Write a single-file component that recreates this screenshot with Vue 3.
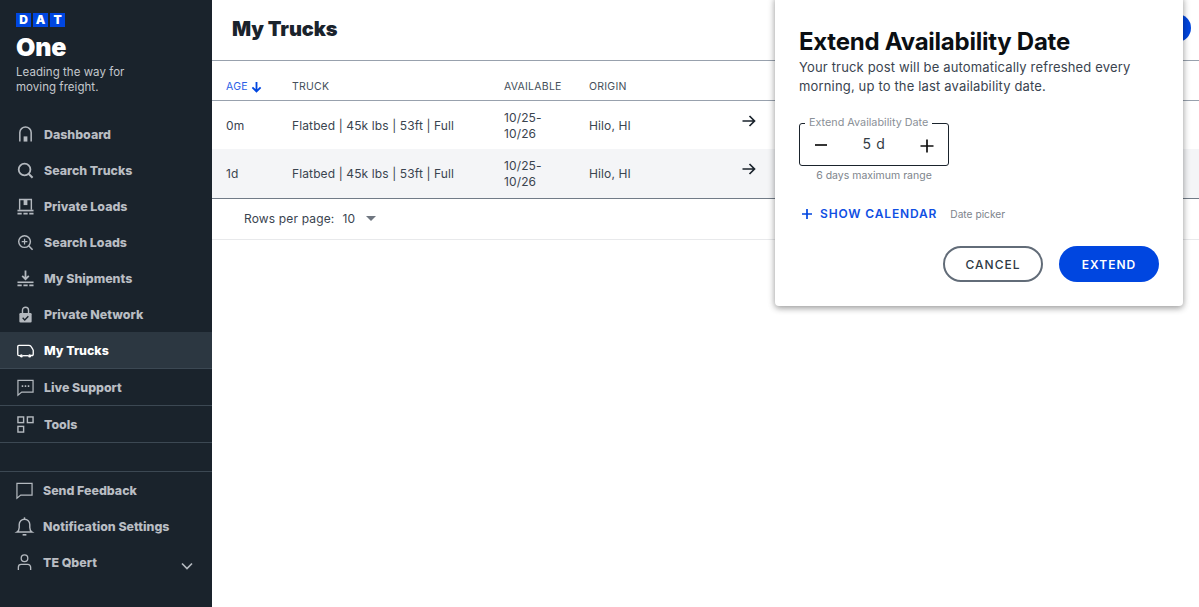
<script setup>
const plainItems = [
  { label: 'Dashboard', icon: 'home' },
  { label: 'Search Trucks', icon: 'search' },
  { label: 'Private Loads', icon: 'loads' },
  { label: 'Search Loads', icon: 'searchplus' },
  { label: 'My Shipments', icon: 'ship' },
  { label: 'Private Network', icon: 'lock' },
]
const rows = [
  { age: '0m', shaded: false },
  { age: '1d', shaded: true },
]
</script>

<template>
  <div class="page">
    <aside class="side">
      <div class="brand">
        <div class="dat"><span>D</span><span>A</span><span>T</span></div>
        <div class="one">One</div>
        <p class="tag">Leading the way for<br />moving freight.</p>
      </div>
      <nav class="nav">
        <a v-for="it in plainItems" :key="it.label" class="item">
          <svg class="ic" viewBox="0 0 18 18" fill="none" stroke="#b4b9bf" stroke-width="1.6">
            <template v-if="it.icon === 'home'">
              <path d="M3 16.500V7a6 6 0 0 1 12 0v9.500" />
              <path d="M7 16.500V11h4v5.500z" fill="#b4b9bf" stroke="none" />
            </template>
            <template v-else-if="it.icon === 'search'">
              <circle cx="8" cy="8" r="6.200" stroke-width="1.900" />
              <path d="M12.300 12.500 16.500 16.700" stroke-width="2.200" />
            </template>
            <template v-else-if="it.icon === 'loads'">
              <path d="M2.800 12.500V1.500h12.400v11" stroke-width="1.500" />
              <path d="M7 2h4v5.500H7z" fill="#b4b9bf" stroke="none" />
              <path d="M.5 13.300h17" stroke-width="1.800" />
              <path d="M.5 16.500h4.500M6.800 16.500h4.500M13 16.500h4.500" stroke-width="1.800" />
            </template>
            <template v-else-if="it.icon === 'searchplus'">
              <circle cx="8" cy="8" r="6.200" stroke-width="1.500" />
              <path d="M12.300 12.500 16.500 16.700" stroke-width="1.700" />
              <path d="M8 5v6M5 8h6" stroke-width="1.300" />
            </template>
            <template v-else-if="it.icon === 'ship'">
              <path d="M9 .5v9M5.500 6.300 9 9.800l3.500-3.500" stroke-width="1.900" />
              <path d="M.5 13h17" stroke-width="1.700" />
              <path d="M.5 16.300h4.500M6.800 16.300h4.500M13 16.300h4.500" stroke-width="1.800" />
            </template>
            <template v-else>
              <path d="M5.800 8V4.500a3.200 3.200 0 0 1 6.400 0V8" stroke-width="1.500" />
              <rect x="2.500" y="7.500" width="13" height="10" rx="1.200" fill="#b4b9bf" stroke="none" />
              <path d="m6 12.500 2.200 2.200 3.800-3.800" stroke="#1a232c" stroke-width="1.500" />
            </template>
          </svg>
          <span>{{ it.label }}</span>
        </a>
        <a class="item active">
          <svg class="ic" viewBox="0 0 18 18" fill="none" stroke="#fff" stroke-width="1.400">
            <path d="M3.500 14.500H2a1.200 1.200 0 0 1-1.200-1.200V4.700A1.200 1.200 0 0 1 2 3.500h10.500c1 0 1.800.4 2.300 1.200l2 3c.3.4.4.9.4 1.400v4a1.200 1.200 0 0 1-1.200 1.200h-1.500" />
            <path d="M5.800 14.500h6.400" />
            <circle cx="4.600" cy="14.700" r=".9" />
            <circle cx="13.400" cy="14.700" r=".9" />
          </svg>
          <span>My Trucks</span>
        </a>
        <a class="item ruled tall">
          <svg class="ic" viewBox="0 0 18 18" fill="none" stroke="#b4b9bf" stroke-width="1.300">
            <path d="M1 1.500h16v12.300H5l-4 3.300z" />
            <path d="M5 7.500h1.600M8.200 7.500h1.600M11.400 7.500H13" stroke-width="1.700" />
          </svg>
          <span>Live Support</span>
        </a>
        <a class="item ruled tall">
          <svg class="ic" viewBox="0 0 18 18" fill="none" stroke="#b4b9bf" stroke-width="1.500">
            <rect x="1" y="1" width="6" height="6" />
            <rect x="11" y="1" width="6" height="6" />
            <rect x="1" y="11" width="6" height="6" />
          </svg>
          <span>Tools</span>
        </a>
      </nav>
      <div class="foot">
        <a class="item low">
          <svg class="ic" viewBox="0 0 18 18" fill="none" stroke="#b4b9bf" stroke-width="1.300">
            <path d="M1 1.500h16v12.300H5l-4 3.300z" />
          </svg>
          <span>Send Feedback</span>
        </a>
        <a class="item low">
          <svg class="ic bell" viewBox="0 0 18 20" fill="none" stroke="#b4b9bf" stroke-width="1.500">
            <path d="M1 15.800c1.600-1 2.400-2.400 2.400-4.800V8a5.600 5.600 0 0 1 11.200 0v3c0 2.400.8 3.800 2.400 4.800z" />
            <path d="M9 .3v2" />
            <path d="M7 18.800h4" stroke-width="1.700" />
          </svg>
          <span>Notification Settings</span>
        </a>
        <a class="item low">
          <svg class="ic" viewBox="0 0 18 18" fill="none" stroke="#b4b9bf" stroke-width="1.400">
            <circle cx="9" cy="4.500" r="3.500" />
            <path d="M2.500 17v-3a3 3 0 0 1 3-3h7a3 3 0 0 1 3 3v3" />
          </svg>
          <span>TE Qbert</span>
          <svg class="chev" viewBox="0 0 12 8" fill="none" stroke="#b4b9bf" stroke-width="1.700">
            <path d="m1 1.500 5 5 5-5" />
          </svg>
        </a>
      </div>
    </aside>

    <main class="main">
      <header class="top">
        <h1>My Trucks</h1>
        <span class="fab"></span>
      </header>
      <div class="thead">
        <div class="c-age sorted">
          AGE
          <svg class="sort" viewBox="0 0 12 12" fill="none" stroke="#0046e0" stroke-width="2">
            <path d="M6 .5v10M1.500 6.300 6 10.800l4.500-4.500" />
          </svg>
        </div>
        <div class="c-truck">TRUCK</div>
        <div class="c-avail">AVAILABLE</div>
        <div class="c-origin">ORIGIN</div>
      </div>
      <div v-for="r in rows" :key="r.age" class="row" :class="{ shaded: r.shaded }">
        <div class="c-age">{{ r.age }}</div>
        <div class="c-truck">Flatbed | 45k lbs | 53ft | Full</div>
        <div class="c-avail">10/25-<br />10/26</div>
        <div class="c-origin">Hilo, HI</div>
        <svg class="arrow" viewBox="0 0 14 12" fill="none" stroke="#1a232c" stroke-width="1.700">
          <path d="M.5 6h12M7.500 1l5 5-5 5" />
        </svg>
      </div>
      <div class="pager">
        <span>Rows per page:</span>
        <span class="count">10</span>
        <span class="caret"></span>
      </div>
    </main>

    <section class="pop">
      <h2>Extend Availability Date</h2>
      <p class="desc">Your truck post will be automatically refreshed every morning, up to the last availability date.</p>
      <div class="stepper">
        <span class="legend">Extend Availability Date</span>
        <svg class="step minus" viewBox="0 0 14 14" stroke="#111" stroke-width="1.700"><path d="M1 7h12" /></svg>
        <span class="val">5 d</span>
        <svg class="step" viewBox="0 0 14 14" stroke="#111" stroke-width="1.700"><path d="M.5 7h13M7 .5v13" /></svg>
      </div>
      <div class="hint">6 days maximum range</div>
      <div class="cal">
        <svg class="plus" viewBox="0 0 10 10" stroke="#0046e0" stroke-width="1.700"><path d="M0 5h10M5 0v10" /></svg>
        <span class="show">SHOW CALENDAR</span>
        <span class="picker">Date picker</span>
      </div>
      <div class="actions">
        <button class="btn cancel">CANCEL</button>
        <button class="btn extend">EXTEND</button>
      </div>
    </section>
  </div>
</template>

<style scoped>
.page {
  display: flex;
  width: 1199px;
  height: 607px;
  position: relative;
  overflow: hidden;
  background: #fff;
  font-family: Inter, "Liberation Sans", sans-serif;
  color: #2f3a45;
}
.side {
  width: 212px;
  flex: none;
  background: #1a232c;
  display: flex;
  flex-direction: column;
}
.brand { padding: 13px 16px 0; height: 116px; box-sizing: border-box; }
.dat { display: flex; gap: 2px; }
.dat span {
  width: 15px;
  height: 14px;
  background: #0046e0;
  color: #fff;
  font-size: 12px;
  font-weight: 900;
  line-height: 14px;
  text-align: center;
}
.one {
  color: #fff;
  font-size: 25px;
  font-weight: 900;
  line-height: 26px;
  margin-top: 7px;
  letter-spacing: -.2px;
}
.tag {
  margin: 5px 0 0;
  color: #c4c8cc;
  font-size: 11.500px;
  line-height: 15px;
  letter-spacing: .04px;
}
.nav { display: flex; flex-direction: column; }
.item {
  height: 36px;
  display: flex;
  align-items: center;
  padding-left: 17px;
  gap: 10px;
  color: #b9bdc3;
  font-size: 12.400px;
  font-weight: 800;
  box-sizing: border-box;
}
.ic { width: 17px; height: 17px; flex: none; overflow: visible; }
.bell { height: 19px; }
.active {
  height: 37px;
  background: #2c3741;
  color: #fff;
  border-bottom: 1px solid #3c4853;
}
.ruled { border-bottom: 1px solid #3c4853; }
.tall { height: 37px; }
.foot {
  margin-top: 28px;
  border-top: 1px solid #3c4853;
}
.low { padding-left: 16px; }
.chev { width: 12px; height: 8px; margin-left: auto; margin-right: 19px; margin-top: 8px; }

.main { flex: 1; display: flex; flex-direction: column; }
.top {
  height: 61px;
  box-sizing: border-box;
  border-bottom: 1px solid #98a1ad;
  padding: 0 20px;
  display: flex;
  align-items: center;
  position: relative;
}
h1 {
  margin: 0 0 3px;
  font-size: 20px;
  font-weight: 900;
  color: #1a232c;
  letter-spacing: -.1px;
}
.fab {
  position: absolute;
  right: 8px;
  top: 14px;
  width: 28px;
  height: 28px;
  border-radius: 50%;
  background: #0046e0;
}
.thead, .row {
  display: grid;
  grid-template-columns: 66px 212px 85px 153px 20px;
  padding-left: 14px;
  align-items: center;
  box-sizing: border-box;
}
.thead {
  height: 40px;
  border-bottom: 1px solid #98a1ad;
  font-size: 10.500px;
  letter-spacing: .25px;
  color: #454f5a;
  padding-top: 14px;
  padding-bottom: 2px;
}
.sorted { color: #2a5ee6; display: flex; align-items: center; gap: 3px; }
.sort { width: 11px; height: 12px; }
.row {
  height: 48px;
  padding-top: 1px;
  font-size: 12px;
  letter-spacing: .12px;
  color: #3a444f;
  line-height: 16px;
}
.row.shaded {
  height: 50px;
  padding-top: 0;
  background: #f4f5f7;
  border-bottom: 1px solid #717b87;
}
.arrow { width: 14px; height: 12px; margin-bottom: 10px; }
.pager {
  height: 41px;
  box-sizing: border-box;
  border-bottom: 1px solid #e8e9eb;
  padding-left: 32px;
  padding-bottom: 2px;
  display: flex;
  align-items: center;
  font-size: 12px;
  letter-spacing: .15px;
  color: #3a444f;
}
.count { margin-left: 8px; }
.caret {
  margin-left: 11px;
  border-left: 5px solid transparent;
  border-right: 5px solid transparent;
  border-top: 5px solid #6f7680;
}

.pop {
  position: absolute;
  left: 775px;
  top: -4px;
  width: 408px;
  height: 310px;
  box-sizing: border-box;
  padding: 31px 24px 0;
  background: #fff;
  border-radius: 4px;
  box-shadow: 0 2px 6px rgba(0, 0, 0, .35), 0 1px 10px rgba(0, 0, 0, .1);
  display: flex;
  flex-direction: column;
  align-items: flex-start;
}
h2 {
  margin: 0;
  font-size: 24px;
  font-weight: 700;
  line-height: 30px;
  color: #0b0f13;
  letter-spacing: -.25px;
}
.desc {
  margin: 1px 0 0;
  width: 350px;
  font-size: 13px;
  line-height: 19px;
  letter-spacing: .16px;
  color: #3a444f;
}
.stepper {
  position: relative;
  margin-top: 27px;
  padding: 0 14px;
  width: 150px;
  height: 43px;
  box-sizing: border-box;
  border: 1px solid #1a232c;
  border-radius: 3px;
  display: flex;
  align-items: center;
  justify-content: space-between;
}
.legend {
  position: absolute;
  left: 5px;
  top: -7px;
  padding: 0 4px;
  background: #fff;
  font-size: 10.800px;
  color: #8a9097;
  line-height: 12px;
  white-space: nowrap;
}
.step { width: 14px; height: 14px; margin-top: 3px; }
.minus { margin-top: 1px; }
.val { font-size: 14px; letter-spacing: .6px; color: #333c45; margin-top: -2px; }
.hint {
  width: 150px;
  margin-top: 3px;
  text-align: center;
  font-size: 10.500px;
  line-height: 13px;
  color: #7d848c;
}
.cal {
  display: flex;
  align-items: center;
  margin-top: 24px;
  margin-left: 3px;
}
.plus { width: 10px; height: 10px; }
.show {
  margin-left: 8px;
  font-size: 12px;
  line-height: 15px;
  font-weight: 600;
  letter-spacing: .85px;
  color: #0f4fe3;
}
.picker {
  margin-left: 13px;
  font-size: 10.200px;
  color: #7d848c;
}
.actions {
  align-self: flex-end;
  display: flex;
  gap: 16px;
  margin-top: 25px;
}
.btn {
  height: 36px;
  border-radius: 18px;
  font-family: inherit;
  font-size: 12px;
  letter-spacing: 1px;
  box-sizing: border-box;
  padding: 0;
}
.cancel {
  width: 100px;
  background: #fff;
  border: 2px solid #626c78;
  color: #2f3a45;
  font-weight: 500;
}
.extend {
  width: 100px;
  background: #0046e0;
  border: 0;
  color: #fff;
  font-weight: 600;
}
</style>
